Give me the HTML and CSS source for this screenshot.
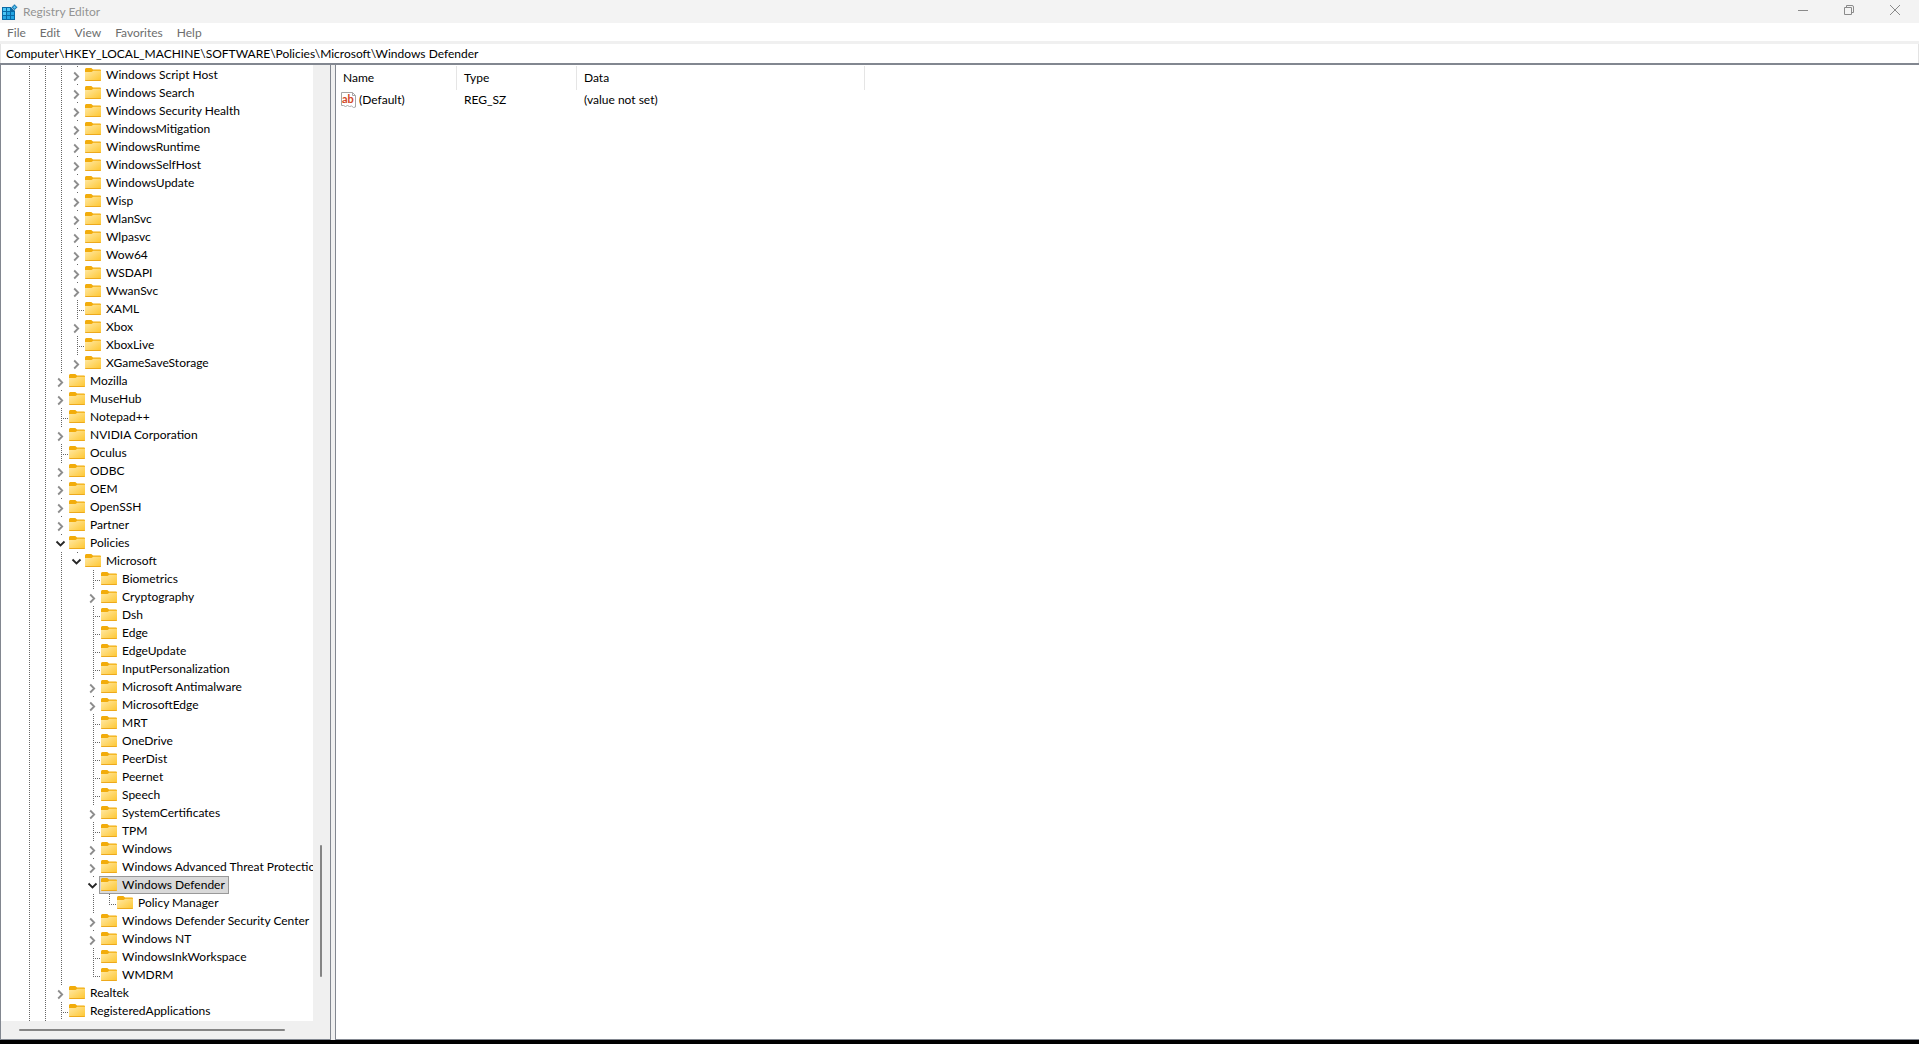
FILE: index.html
```html
<!DOCTYPE html>
<html lang="en">

<head>
    <meta charset="UTF-8">
    <meta name="viewport" content="width=device-width, initial-scale=1.0">
    <title>Registry Editor</title>
    <link rel="stylesheet" href="styles.css">
</head>

<body>
    <!-- Shared icons -->
    <svg class="sprite" aria-hidden="true">
        <defs>
            <linearGradient id="folder-front" x1="0" y1="0" x2="1" y2="1">
                <stop offset="0" stop-color="#ffe9a6" />
                <stop offset="1" stop-color="#fec62f" />
            </linearGradient>
        </defs>
        <symbol id="folder" viewBox="0 0 16 13">
            <path d="M0 1.5Q0 0 1.3 0H6.3L8 1.5H15Q16 1.5 16 2.5V11H0Z" fill="#f2ac0b" />
            <path d="M0 4H6.5L8.3 2.7H16V12Q16 13 15 13H1Q0 13 0 12Z" fill="url(#folder-front)" />
            <path d="M0 11.9H16Q16 13 15 13H1Q0 13 0 11.9Z" fill="#eda91c" />
        </symbol>
        <symbol id="closed" viewBox="0 0 14 18">
            <path d="M5.2 6.5L9.2 10.5L5.2 14.5" fill="none" stroke="#8c8c8c" stroke-width="1.8" />
        </symbol>
        <symbol id="open" viewBox="0 0 14 18">
            <path d="M3.5 7.5L7.5 11.5L11.5 7.5" fill="none" stroke="#262626" stroke-width="1.8" />
        </symbol>
    </svg>

    <header class="titlebar">
        <svg class="app-icon" viewBox="0 0 16 16" aria-hidden="true">
            <path d="M0 3H13V16H0Z" fill="#0a6aa6" />
            <path d="M1 4H4V7H1ZM5 4H8V7H5ZM1 8H4V11H1Z" fill="#4cc6f5" />
            <path d="M5 8H8V11H5ZM9 8H12V11H9ZM1 12H4V15H1ZM5 12H8V15H5ZM9 12H12V15H9Z" fill="#25a5e2" />
            <path d="M9 2H16V0H9Z" fill="#f3f3f3" />
            <path d="M12.5 0L15.7 3.2L12.5 6.4L9.3 3.2Z" fill="#1478b4" stroke="#f3f3f3" stroke-width=".6" />
            <path d="M12.5 1.7L14 3.2L12.5 4.7L11 3.2Z" fill="#5fc8f2" />
        </svg>
        <h1>Registry Editor</h1>
        <div class="window-buttons">
            <button type="button" aria-label="Minimize"><svg viewBox="0 0 12 12"><path d="M1 6.5H11" /></svg></button>
            <button type="button" aria-label="Restore"><svg viewBox="0 0 12 12"><path d="M1.5 3.5H8.5V10.5H1.5ZM3.5 3V1.5H9Q10.5 1.5 10.5 3V8.5H9" /></svg></button>
            <button type="button" aria-label="Close"><svg viewBox="0 0 12 12"><path d="M1 1L11 11M11 1L1 11" /></svg></button>
        </div>
    </header>

    <nav class="menubar">
        <button type="button">File</button>
        <button type="button">Edit</button>
        <button type="button">View</button>
        <button type="button">Favorites</button>
        <button type="button">Help</button>
    </nav>

    <div class="address">
        <input type="text" aria-label="Address" value="Computer\HKEY_LOCAL_MACHINE\SOFTWARE\Policies\Microsoft\Windows Defender">
    </div>

    <main class="panes">
        <section class="tree-pane" aria-label="Keys">
            <div class="tree-view">
                <ul class="tree">
                    <li>
                        <ul>
                            <li><div class="row"><button class="toggle" aria-label="Expand Windows Script Host"><svg><use href="#closed" /></svg></button><a class="key" href="#"><svg class="folder"><use href="#folder" /></svg>Windows Script Host</a></div></li>
                            <li><div class="row"><button class="toggle" aria-label="Expand Windows Search"><svg><use href="#closed" /></svg></button><a class="key" href="#"><svg class="folder"><use href="#folder" /></svg>Windows Search</a></div></li>
                            <li><div class="row"><button class="toggle" aria-label="Expand Windows Security Health"><svg><use href="#closed" /></svg></button><a class="key" href="#"><svg class="folder"><use href="#folder" /></svg>Windows Security Health</a></div></li>
                            <li><div class="row"><button class="toggle" aria-label="Expand WindowsMitigation"><svg><use href="#closed" /></svg></button><a class="key" href="#"><svg class="folder"><use href="#folder" /></svg>WindowsMitigation</a></div></li>
                            <li><div class="row"><button class="toggle" aria-label="Expand WindowsRuntime"><svg><use href="#closed" /></svg></button><a class="key" href="#"><svg class="folder"><use href="#folder" /></svg>WindowsRuntime</a></div></li>
                            <li><div class="row"><button class="toggle" aria-label="Expand WindowsSelfHost"><svg><use href="#closed" /></svg></button><a class="key" href="#"><svg class="folder"><use href="#folder" /></svg>WindowsSelfHost</a></div></li>
                            <li><div class="row"><button class="toggle" aria-label="Expand WindowsUpdate"><svg><use href="#closed" /></svg></button><a class="key" href="#"><svg class="folder"><use href="#folder" /></svg>WindowsUpdate</a></div></li>
                            <li><div class="row"><button class="toggle" aria-label="Expand Wisp"><svg><use href="#closed" /></svg></button><a class="key" href="#"><svg class="folder"><use href="#folder" /></svg>Wisp</a></div></li>
                            <li><div class="row"><button class="toggle" aria-label="Expand WlanSvc"><svg><use href="#closed" /></svg></button><a class="key" href="#"><svg class="folder"><use href="#folder" /></svg>WlanSvc</a></div></li>
                            <li><div class="row"><button class="toggle" aria-label="Expand Wlpasvc"><svg><use href="#closed" /></svg></button><a class="key" href="#"><svg class="folder"><use href="#folder" /></svg>Wlpasvc</a></div></li>
                            <li><div class="row"><button class="toggle" aria-label="Expand Wow64"><svg><use href="#closed" /></svg></button><a class="key" href="#"><svg class="folder"><use href="#folder" /></svg>Wow64</a></div></li>
                            <li><div class="row"><button class="toggle" aria-label="Expand WSDAPI"><svg><use href="#closed" /></svg></button><a class="key" href="#"><svg class="folder"><use href="#folder" /></svg>WSDAPI</a></div></li>
                            <li><div class="row"><button class="toggle" aria-label="Expand WwanSvc"><svg><use href="#closed" /></svg></button><a class="key" href="#"><svg class="folder"><use href="#folder" /></svg>WwanSvc</a></div></li>
                            <li><div class="row leaf"><a class="key" href="#"><svg class="folder"><use href="#folder" /></svg>XAML</a></div></li>
                            <li><div class="row"><button class="toggle" aria-label="Expand Xbox"><svg><use href="#closed" /></svg></button><a class="key" href="#"><svg class="folder"><use href="#folder" /></svg>Xbox</a></div></li>
                            <li><div class="row leaf"><a class="key" href="#"><svg class="folder"><use href="#folder" /></svg>XboxLive</a></div></li>
                            <li><div class="row"><button class="toggle" aria-label="Expand XGameSaveStorage"><svg><use href="#closed" /></svg></button><a class="key" href="#"><svg class="folder"><use href="#folder" /></svg>XGameSaveStorage</a></div></li>
                        </ul>
                    </li>
                    <li><div class="row"><button class="toggle" aria-label="Expand Mozilla"><svg><use href="#closed" /></svg></button><a class="key" href="#"><svg class="folder"><use href="#folder" /></svg>Mozilla</a></div></li>
                    <li><div class="row"><button class="toggle" aria-label="Expand MuseHub"><svg><use href="#closed" /></svg></button><a class="key" href="#"><svg class="folder"><use href="#folder" /></svg>MuseHub</a></div></li>
                    <li><div class="row leaf"><a class="key" href="#"><svg class="folder"><use href="#folder" /></svg>Notepad++</a></div></li>
                    <li><div class="row"><button class="toggle" aria-label="Expand NVIDIA Corporation"><svg><use href="#closed" /></svg></button><a class="key" href="#"><svg class="folder"><use href="#folder" /></svg>NVIDIA Corporation</a></div></li>
                    <li><div class="row leaf"><a class="key" href="#"><svg class="folder"><use href="#folder" /></svg>Oculus</a></div></li>
                    <li><div class="row"><button class="toggle" aria-label="Expand ODBC"><svg><use href="#closed" /></svg></button><a class="key" href="#"><svg class="folder"><use href="#folder" /></svg>ODBC</a></div></li>
                    <li><div class="row"><button class="toggle" aria-label="Expand OEM"><svg><use href="#closed" /></svg></button><a class="key" href="#"><svg class="folder"><use href="#folder" /></svg>OEM</a></div></li>
                    <li><div class="row"><button class="toggle" aria-label="Expand OpenSSH"><svg><use href="#closed" /></svg></button><a class="key" href="#"><svg class="folder"><use href="#folder" /></svg>OpenSSH</a></div></li>
                    <li><div class="row"><button class="toggle" aria-label="Expand Partner"><svg><use href="#closed" /></svg></button><a class="key" href="#"><svg class="folder"><use href="#folder" /></svg>Partner</a></div></li>
                    <li>
                        <div class="row"><button class="toggle" aria-label="Collapse Policies"><svg><use href="#open" /></svg></button><a class="key" href="#"><svg class="folder"><use href="#folder" /></svg>Policies</a></div>
                        <ul>
                            <li>
                                <div class="row"><button class="toggle" aria-label="Collapse Microsoft"><svg><use href="#open" /></svg></button><a class="key" href="#"><svg class="folder"><use href="#folder" /></svg>Microsoft</a></div>
                                <ul>
                                    <li><div class="row leaf"><a class="key" href="#"><svg class="folder"><use href="#folder" /></svg>Biometrics</a></div></li>
                                    <li><div class="row"><button class="toggle" aria-label="Expand Cryptography"><svg><use href="#closed" /></svg></button><a class="key" href="#"><svg class="folder"><use href="#folder" /></svg>Cryptography</a></div></li>
                                    <li><div class="row leaf"><a class="key" href="#"><svg class="folder"><use href="#folder" /></svg>Dsh</a></div></li>
                                    <li><div class="row leaf"><a class="key" href="#"><svg class="folder"><use href="#folder" /></svg>Edge</a></div></li>
                                    <li><div class="row leaf"><a class="key" href="#"><svg class="folder"><use href="#folder" /></svg>EdgeUpdate</a></div></li>
                                    <li><div class="row leaf"><a class="key" href="#"><svg class="folder"><use href="#folder" /></svg>InputPersonalization</a></div></li>
                                    <li><div class="row"><button class="toggle" aria-label="Expand Microsoft Antimalware"><svg><use href="#closed" /></svg></button><a class="key" href="#"><svg class="folder"><use href="#folder" /></svg>Microsoft Antimalware</a></div></li>
                                    <li><div class="row"><button class="toggle" aria-label="Expand MicrosoftEdge"><svg><use href="#closed" /></svg></button><a class="key" href="#"><svg class="folder"><use href="#folder" /></svg>MicrosoftEdge</a></div></li>
                                    <li><div class="row leaf"><a class="key" href="#"><svg class="folder"><use href="#folder" /></svg>MRT</a></div></li>
                                    <li><div class="row leaf"><a class="key" href="#"><svg class="folder"><use href="#folder" /></svg>OneDrive</a></div></li>
                                    <li><div class="row leaf"><a class="key" href="#"><svg class="folder"><use href="#folder" /></svg>PeerDist</a></div></li>
                                    <li><div class="row leaf"><a class="key" href="#"><svg class="folder"><use href="#folder" /></svg>Peernet</a></div></li>
                                    <li><div class="row leaf"><a class="key" href="#"><svg class="folder"><use href="#folder" /></svg>Speech</a></div></li>
                                    <li><div class="row"><button class="toggle" aria-label="Expand SystemCertificates"><svg><use href="#closed" /></svg></button><a class="key" href="#"><svg class="folder"><use href="#folder" /></svg>SystemCertificates</a></div></li>
                                    <li><div class="row leaf"><a class="key" href="#"><svg class="folder"><use href="#folder" /></svg>TPM</a></div></li>
                                    <li><div class="row"><button class="toggle" aria-label="Expand Windows"><svg><use href="#closed" /></svg></button><a class="key" href="#"><svg class="folder"><use href="#folder" /></svg>Windows</a></div></li>
                                    <li><div class="row"><button class="toggle" aria-label="Expand Windows Advanced Threat Protection"><svg><use href="#closed" /></svg></button><a class="key" href="#"><svg class="folder"><use href="#folder" /></svg>Windows Advanced Threat Protection</a></div></li>
                                    <li>
                                        <div class="row"><button class="toggle" aria-label="Collapse Windows Defender"><svg><use href="#open" /></svg></button><a class="key selected" href="#"><svg class="folder"><use href="#folder" /></svg>Windows Defender</a></div>
                                        <ul>
                                            <li><div class="row leaf"><a class="key" href="#"><svg class="folder"><use href="#folder" /></svg>Policy Manager</a></div></li>
                                        </ul>
                                    </li>
                                    <li><div class="row"><button class="toggle" aria-label="Expand Windows Defender Security Center"><svg><use href="#closed" /></svg></button><a class="key" href="#"><svg class="folder"><use href="#folder" /></svg>Windows Defender Security Center</a></div></li>
                                    <li><div class="row"><button class="toggle" aria-label="Expand Windows NT"><svg><use href="#closed" /></svg></button><a class="key" href="#"><svg class="folder"><use href="#folder" /></svg>Windows NT</a></div></li>
                                    <li><div class="row leaf"><a class="key" href="#"><svg class="folder"><use href="#folder" /></svg>WindowsInkWorkspace</a></div></li>
                                    <li><div class="row leaf"><a class="key" href="#"><svg class="folder"><use href="#folder" /></svg>WMDRM</a></div></li>
                                </ul>
                            </li>
                        </ul>
                    </li>
                    <li><div class="row"><button class="toggle" aria-label="Expand Realtek"><svg><use href="#closed" /></svg></button><a class="key" href="#"><svg class="folder"><use href="#folder" /></svg>Realtek</a></div></li>
                    <li class="more"><div class="row leaf"><a class="key" href="#"><svg class="folder"><use href="#folder" /></svg>RegisteredApplications</a></div></li>
                </ul>
            </div>
            <div class="scroll-y"><div class="thumb"></div></div>
            <div class="scroll-x"><div class="thumb"></div></div>
        </section>

        <section class="value-pane" aria-label="Values">
            <table class="values">
                <thead>
                    <tr>
                        <th class="col-name">Name</th>
                        <th class="col-type">Type</th>
                        <th class="col-data">Data</th>
                    </tr>
                </thead>
                <tbody>
                    <tr>
                        <td>
                            <div class="value-name">
                                <svg class="value-icon" viewBox="0 0 16 16" aria-hidden="true">
                                    <path d="M.5 .5H11.5L14.5 3.5V15L12.5 15.5L10.5 14L8.5 14.5L6.5 13.5L4.5 14.5L2.5 13.5L.5 13.5Z" fill="#fff" stroke="#a6a6a6" />
                                    <path d="M11.5 .5V3.5H14.5" fill="none" stroke="#a6a6a6" />
                                    <text x="1" y="11">ab</text>
                                </svg>
                                (Default)
                            </div>
                        </td>
                        <td>REG_SZ</td>
                        <td>(value not set)</td>
                    </tr>
                </tbody>
            </table>
        </section>
    </main>
</body>

</html>
```
FILE: styles.css
```css
* {
    box-sizing: border-box;
}

body {
    margin: 0;
    height: 100vh;
    display: flex;
    flex-direction: column;
    border-bottom: 4px solid #000;
    background-color: #fff;
    color: #000;
    font-family: Lato, "Open Sans", sans-serif;
    font-size: 12px;
    line-height: 16px;
    overflow: hidden;
}

button,
input {
    margin: 0;
    padding: 0;
    border: none;
    background: none;
    color: inherit;
    font: inherit;
}

svg {
    display: block;
    flex: none;
}

.sprite {
    position: absolute;
    width: 0;
    height: 0;
}

/* Title bar */
.titlebar {
    display: flex;
    align-items: center;
    height: 23px;
    padding: 0 1px 0 2px;
    background-color: #f3f3f3;
    color: #949494;
}

.app-icon {
    width: 16px;
    height: 16px;
}

.titlebar h1 {
    margin: 0 0 0 5px;
    padding-top: 1px;
    font-size: 12px;
    font-weight: normal;
}

.window-buttons {
    display: flex;
    height: 100%;
    margin-left: auto;
}

.window-buttons button {
    width: 46px;
    padding-bottom: 3px;
    display: flex;
    align-items: center;
    justify-content: center;
}

.window-buttons svg {
    width: 12px;
    height: 12px;
    fill: none;
    stroke: #8a8a8a;
}

/* Menu */
.menubar {
    display: flex;
    gap: 14px;
    height: 18px;
    padding: 2px 0 0 7px;
    color: #6d6d6d;
}

/* Address bar */
.address {
    padding-top: 3px;
    background-color: #f0f0f0;
    border-bottom: 2px solid #828790;
}

.address input {
    display: block;
    width: 100%;
    height: 19px;
    padding: 0 5px;
    border-left: 1px solid #e3e3e3;
    border-right: 1px solid #e3e3e3;
    background-color: #fff;
}

/* Panes */
.panes {
    flex: 1;
    min-height: 0;
    display: flex;
    gap: 4px;
    background-color: #f0f0f0;
}

.tree-pane {
    flex: none;
    width: 331px;
    display: grid;
    grid-template-columns: 1fr 17px;
    grid-template-rows: 1fr 18px;
    border: 1px solid #828790;
    border-top: none;
    background-color: #f0f0f0;
}

.tree-view {
    min-width: 0;
    min-height: 0;
    overflow: hidden;
    padding-top: 1px;
    background-color: #fff;
}

.tree {
    height: 100%;
    /* guides of the two upper levels */
    background-image:
        repeating-linear-gradient(#666 0 1px, transparent 1px 2px),
        repeating-linear-gradient(#666 0 1px, transparent 1px 2px);
    background-size: 1px 100%, 1px 100%;
    background-position: 28px 0, 44px 0;
    background-repeat: no-repeat;
}

.tree,
.tree ul {
    margin: 0;
    padding: 0;
    list-style: none;
}

.tree ul {
    padding-left: 16px;
}

.tree > li {
    margin-left: 52px;
}

.tree li {
    background: repeating-linear-gradient(#666 0 1px, transparent 1px 2px) 8px 0 / 1px 100% no-repeat;
}

.tree li:last-child {
    background-size: 1px 11px;
}

.tree li.more {
    background-size: 1px 100%;
}

.row {
    display: flex;
    align-items: center;
    height: 18px;
    white-space: nowrap;
}

.leaf {
    padding-left: 14px;
    background: repeating-linear-gradient(90deg, #666 0 1px, transparent 1px 2px) 8px 10px / 8px 1px no-repeat;
}

.toggle {
    flex: none;
    width: 14px;
    height: 16px;
    overflow: hidden;
    background-color: #fff;
}

.toggle svg {
    width: 14px;
    height: 18px;
    margin-top: -1px;
}

.key {
    flex: none;
    display: flex;
    align-items: center;
    gap: 5px;
    height: 18px;
    padding: 0 3px 0 1px;
    border: 1px solid transparent;
    color: inherit;
    text-decoration: none;
}

.key.selected {
    background-color: #d9d9d9;
    border-color: #999;
}

.folder {
    width: 16px;
    height: 13px;
    margin-bottom: 1px;
}

/* Scroll bars */
.scroll-y {
    display: grid;
    grid-template-rows: 780fr 132fr 44fr;
    justify-content: center;
    padding-right: 1px;
}

.scroll-x {
    display: grid;
    grid-template-columns: 18fr 266fr 28fr;
    align-content: center;
}

.thumb {
    min-width: 2px;
    min-height: 2px;
    border-radius: 1px;
    background-color: #858585;
}

.scroll-y .thumb {
    grid-row: 2;
}

.scroll-x .thumb {
    grid-column: 2;
}

/* Values */
.value-pane {
    flex: 1;
    border-left: 1px solid #828790;
    border-bottom: 1px solid #828790;
    background-color: #fff;
}

.values {
    margin-top: 1px;
    border-spacing: 0;
    table-layout: fixed;
    width: 529px;
}

.values th {
    height: 24px;
    padding: 0 0 0 7px;
    border-right: 1px solid #e5e5e5;
    font-weight: normal;
    text-align: left;
}

.values td {
    height: 20px;
    padding: 0 0 0 7px;
}

.values td:first-child {
    padding-left: 5px;
}

.col-name {
    width: 121px;
}

.col-type {
    width: 120px;
}

.value-name {
    display: flex;
    align-items: center;
    gap: 2px;
}

.value-icon {
    width: 16px;
    height: 16px;
}

.value-icon text {
    fill: #d24726;
    font-size: 11px;
    font-weight: bold;
}
```
